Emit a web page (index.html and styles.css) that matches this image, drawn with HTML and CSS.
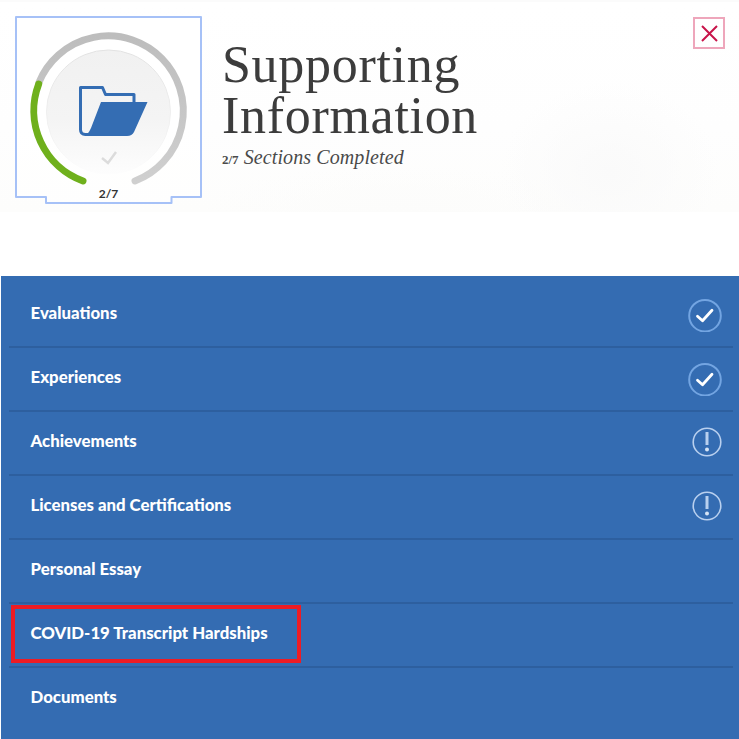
FILE: index.html
```html
<!DOCTYPE html>
<html lang="en">
<head>
<meta charset="utf-8">
<title>Supporting Information</title>
<link rel="stylesheet" href="styles.css">
</head>
<body>
<header class="header">
  <svg class="card" width="190" height="190" viewBox="14 15 190 190">
    <defs>
      <linearGradient id="inner" x1="0" y1="0" x2="0" y2="1">
        <stop offset="0" stop-color="#f1f1f1"/>
        <stop offset="0.55" stop-color="#f4f4f4"/>
        <stop offset="1" stop-color="#fdfdfd"/>
      </linearGradient>
      <linearGradient id="innerEdge" x1="0" y1="0" x2="0" y2="1">
        <stop offset="0" stop-color="#e2e2e2"/>
        <stop offset="0.7" stop-color="#f3f3f3"/>
        <stop offset="1" stop-color="#fdfdfd"/>
      </linearGradient>
      <linearGradient id="ring" x1="0" y1="0" x2="0" y2="1">
        <stop offset="0" stop-color="#bdbdbd"/>
        <stop offset="1" stop-color="#cfcfcf"/>
      </linearGradient>
    </defs>
    <path class="card-edge" d="M16 17H201V197H171.500V203H46V197H16Z"/>
    <circle cx="108.500" cy="112" r="62" fill="url(#inner)" stroke="url(#innerEdge)"/>
    <path class="ring-track" stroke="url(#ring)" d="M38.700 83A75 75 0 1 1 135 181"/>
    <path class="ring-done" d="M38.700 84A75 75 0 0 0 83 181"/>
    <path class="folder-line" d="M90 134.500H85.500Q80.500 134.500 80.500 129.500V87.500H102.500L105.500 94.500H134V102"/>
    <path class="folder-fill" d="M101 102H147.500L134 132Q132 136 127 136H84Q88 135 91 128Z"/>
    <path class="tick" d="M102 158L108 163L116 152"/>
    <text class="ring-count" x="108.500" y="198">2/7</text>
  </svg>
  <div class="heading">
    <h1 class="title">Supporting<br>Information</h1>
    <p class="subtitle"><span class="count">2/7</span> Sections Completed</p>
  </div>
  <button class="close" aria-label="Close">
    <svg width="17" height="17" viewBox="0 0 17 17"><path d="M1 1L16 16M16 1L1 16"/></svg>
  </button>
</header>
<nav class="list">
  <div class="row"><span class="label">Evaluations</span>
    <svg class="status" width="34" height="34" viewBox="0 0 34 34"><circle class="ok-ring" cx="17" cy="17.700" r="15.800"/><path class="ok-tick" d="M9.500 18.200L14.500 22.700L24 12.200"/></svg></div>
  <div class="row"><span class="label">Experiences</span>
    <svg class="status" width="34" height="34" viewBox="0 0 34 34"><circle class="ok-ring" cx="17" cy="17.700" r="15.800"/><path class="ok-tick" d="M9.500 18.200L14.500 22.700L24 12.200"/></svg></div>
  <div class="row"><span class="label">Achievements</span>
    <svg class="status" width="34" height="34" viewBox="0 0 34 34"><circle class="warn-ring" cx="19" cy="16" r="13.800"/><path class="warn-bar" d="M19 6V19"/><circle class="warn-dot" cx="19" cy="23.500" r="2"/></svg></div>
  <div class="row"><span class="label">Licenses and Certifications</span>
    <svg class="status" width="34" height="34" viewBox="0 0 34 34"><circle class="warn-ring" cx="19" cy="16" r="13.800"/><path class="warn-bar" d="M19 6V19"/><circle class="warn-dot" cx="19" cy="23.500" r="2"/></svg></div>
  <div class="row"><span class="label">Personal Essay</span></div>
  <div class="row row-marked"><span class="label">COVID-19 Transcript Hardships</span><span class="marker"></span></div>
  <div class="row row-last"><span class="label">Documents</span></div>
</nav>
</body>
</html>
```

FILE: styles.css
```css
* { box-sizing: border-box; }
html, body { margin: 0; padding: 0; }
body {
  width: 739px;
  height: 739px;
  overflow: hidden;
  background: #fff;
  font-family: "Lato", "Liberation Sans", sans-serif;
}
.header {
  position: relative;
  height: 212px;
  margin-bottom: 64px;
  padding: 15px 0 0 14px;
  display: flex;
  align-items: flex-start;
  background:
    radial-gradient(ellipse 110px 90px at 610px 170px, #fafafa 0%, rgba(250,250,250,0) 100%),
    radial-gradient(ellipse 200px 50px at 400px 212px, #fcfcfb 0%, rgba(252,252,251,0) 100%),
    linear-gradient(180deg, #fff 0%, #fefefe 60%, #fdfdfc 100%);
  border-top: 2px solid #fbfbfb;
}
.card { display: block; flex: none; margin-top: -2px; }
.card-edge { fill: rgba(255,255,255,.5); stroke: #a6c1f7; stroke-width: 2; stroke-linejoin: round; }
.ring-track { fill: none; stroke-width: 7; stroke-linecap: round; }
.ring-done { fill: none; stroke: #6fb01c; stroke-width: 7; stroke-linecap: round; }
.folder-line { fill: none; stroke: #346db3; stroke-width: 3; stroke-linejoin: round; }
.folder-fill { fill: #346db3; }
.tick { fill: none; stroke: #dcdcdc; stroke-width: 2.500; }
.ring-count {
  font-family: "Lato", sans-serif;
  font-size: 12px;
  font-weight: 700;
  fill: #333;
  text-anchor: middle;
}
.heading { margin-left: 18px; padding-top: 22px; }
.title {
  margin: 0;
  font-family: "Liberation Serif", serif;
  font-weight: 400;
  font-size: 52px;
  line-height: 51px;
  letter-spacing: .7px;
  color: #3c3c3c;
}
.subtitle {
  margin: 4px 0 0;
  font-family: "Liberation Serif", serif;
  font-style: italic;
  font-size: 20px;
  line-height: 24px;
  letter-spacing: .1px;
  color: #4a4a4a;
}
.count { font-size: 13px; font-style: normal; font-weight: 700; letter-spacing: 0; }
.close {
  position: absolute;
  top: 15px;
  left: 693px;
  width: 32px;
  height: 32px;
  padding: 0;
  display: flex;
  align-items: center;
  justify-content: center;
  background: transparent;
  border: 2px solid #eea6bb;
}
.close path { fill: none; stroke: #c8144a; stroke-width: 2; }
.list {
  margin-left: 1px;
  height: 463px;
  padding: 8px 6px 0 8px;
  background: #346cb2;
}
.row {
  position: relative;
  height: 64px;
  padding: 0 11px 0 21.500px;
  display: flex;
  align-items: center;
  justify-content: space-between;
  border-bottom: 2px solid #2d5f9f;
}
.row-last { border-bottom-color: transparent; }
.label {
  font-size: 16.800px;
  font-weight: 900;
  line-height: 20px;
  color: #fff;
  position: relative;
  top: -2px;
}
.status { display: block; flex: none; }
.ok-ring { fill: none; stroke: #73a5e2; stroke-width: 2; }
.ok-tick { fill: none; stroke: #fff; stroke-width: 2.800; stroke-linecap: round; stroke-linejoin: round; }
.warn-ring { fill: none; stroke: #b9d0ef; stroke-width: 1.600; }
.warn-bar { fill: none; stroke: #b9d0ef; stroke-width: 3; }
.warn-dot { fill: #d7e4f5; }
.marker {
  position: absolute;
  left: 2px;
  top: 1px;
  width: 290px;
  height: 58px;
  border: 4.500px solid #ed1c24;
}
```
